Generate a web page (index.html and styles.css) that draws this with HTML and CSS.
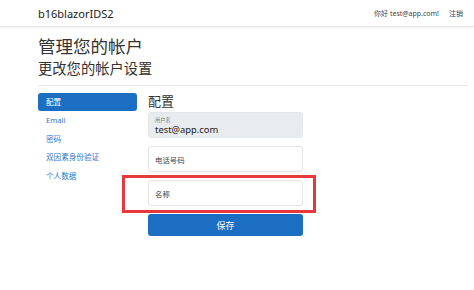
FILE: index.html
```html
<!DOCTYPE html>
<html lang="zh">
<head>
<meta charset="utf-8">
<title>管理您的帐户</title>
<link rel="stylesheet" href="styles.css">
</head>
<body>
<header class="navbar">
  <div class="brand">b16blazorIDS2</div>
  <div class="user">
    <span class="hello">你好 test@app.com!</span>
    <span class="logout">注销</span>
  </div>
</header>
<main class="page">
  <h1 class="title">管理您的帐户</h1>
  <h2 class="subtitle">更改您的帐户设置</h2>
  <hr class="rule">
  <div class="row">
    <nav class="sidenav">
      <div class="nav-item active">配置</div>
      <div class="nav-item">Email</div>
      <div class="nav-item">密码</div>
      <div class="nav-item">双因素身份验证</div>
      <div class="nav-item">个人数据</div>
    </nav>
    <section class="content">
      <h3 class="section-title">配置</h3>
      <div class="field disabled">
        <span class="small-label">用户名</span>
        <span class="value">test@app.com</span>
      </div>
      <div class="field">
        <span class="label">电话号码</span>
      </div>
      <div class="field highlighted">
        <span class="label">名称</span>
        <span class="highlight-box"></span>
      </div>
      <button class="save">保存</button>
    </section>
  </div>
</main>
</body>
</html>
```
FILE: styles.css
```css
html, body {
  margin: 0;
  padding: 0;
  background: #fff;
  font-family: "Noto Sans", "Noto Sans CJK SC", sans-serif;
  color: #333;
}

.navbar {
  height: 27px;
  box-sizing: border-box;
  display: flex;
  align-items: center;
  justify-content: space-between;
  padding: 0 11px 0 38px;
  border-bottom: 1px solid #e6e6e6;
  box-shadow: 0 1px 3px rgba(0, 0, 0, 0.05);
}

.brand {
  font-size: 11px;
  color: #222;
}

.user {
  display: flex;
  gap: 10px;
  font-size: 7px;
  color: #444;
}

.page {
  padding: 0 6px 0 38px;
}

.title {
  margin: 8px 0 0;
  font-size: 17.5px;
  font-weight: 400;
  line-height: 22px;
  color: #333;
}

.subtitle {
  margin: 2px 0 0;
  font-size: 14.3px;
  font-weight: 400;
  line-height: 20px;
  color: #333;
}

.rule {
  margin: 6px 0 0;
  border: 0;
  border-top: 1px solid #e8e8e8;
}

.row {
  display: flex;
  gap: 11px;
  margin-top: 7px;
}

.sidenav {
  width: 99px;
  display: flex;
  flex-direction: column;
}

.nav-item {
  height: 18.6px;
  line-height: 18.6px;
  padding-left: 8px;
  font-size: 7.6px;
  color: #2b78cf;
  border-radius: 3px;
}

.nav-item.active {
  height: 18px;
  line-height: 18px;
  background: #1b6ec2;
  color: #fff;
}

.content {
  width: 155px;
  display: flex;
  flex-direction: column;
  gap: 8px;
}

.section-title {
  margin: 0 0 -7px;
  height: 18px;
  font-size: 13px;
  font-weight: 400;
  line-height: 16px;
  color: #333;
}

.field {
  position: relative;
  height: 26px;
  box-sizing: border-box;
  border: 1px solid #e4e4e4;
  border-radius: 3px;
  padding: 0 6px;
  display: flex;
  flex-direction: column;
  justify-content: center;
  background: #fff;
}

.field.disabled {
  background: #e9ecef;
  border-color: #e4e7ea;
  justify-content: flex-start;
  padding-top: 4px;
}

.small-label {
  font-size: 5.2px;
  line-height: 7px;
  color: #777;
}

.value {
  font-size: 9.4px;
  line-height: 12px;
  color: #222;
}

.label {
  font-size: 7.4px;
  color: #444;
}

.highlight-box {
  position: absolute;
  left: -27px;
  top: -6px;
  right: -14px;
  bottom: -8px;
  border: 3px solid #e8383a;
  pointer-events: none;
}

.save {
  height: 22px;
  border: 0;
  border-radius: 3px;
  background: #1b6ec2;
  color: #fff;
  font-family: inherit;
  font-size: 9px;
  padding: 0;
  margin-top: 0;
}
```
